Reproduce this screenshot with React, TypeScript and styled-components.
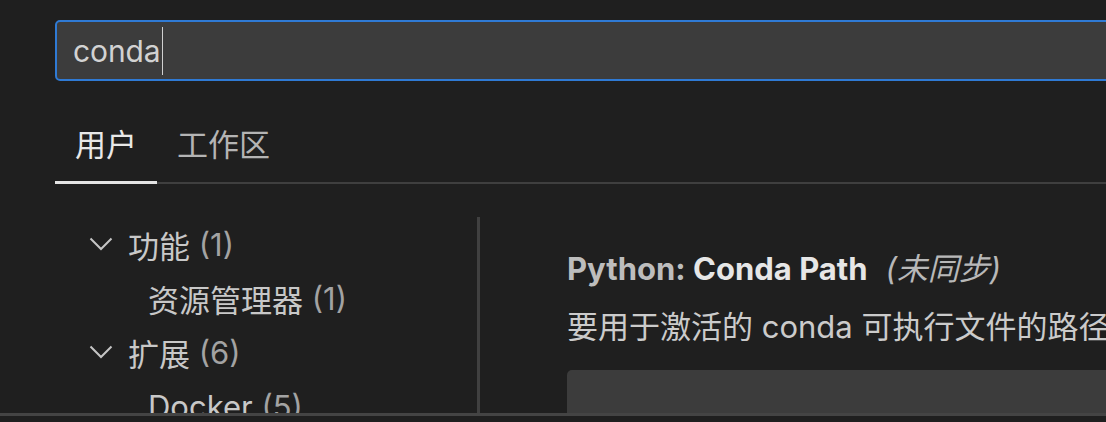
import React from "react";
import styled, { createGlobalStyle } from "styled-components";

const Global = createGlobalStyle`
  html, body {
    margin: 0;
    padding: 0;
    background: #1f1f1f;
    overflow: hidden;
  }
  body {
    font-family: Inter, "Noto Sans CJK SC", sans-serif;
    -webkit-font-smoothing: antialiased;
  }
`;

const Screen = styled.div`
  width: 1106px;
  height: 422px;
  background: #1f1f1f;
  overflow: hidden;
`;

const Editor = styled.div`
  box-sizing: content-box;
  height: 393px;
  padding: 20px 0 0 55px;
  display: flex;
  flex-direction: column;
  overflow: hidden;
  border-bottom: 3px solid #444444;
`;

const SearchBox = styled.div`
  box-sizing: border-box;
  height: 61px;
  width: calc(100% + 20px);
  flex: none;
  border: 2px solid #2f7ad4;
  border-radius: 5px;
  background: #3c3c3c;
  display: flex;
  align-items: center;
  padding-left: 16px;
`;

const SearchText = styled.span`
  font-size: 30px;
  color: #d2d2d2;
  line-height: 1;
  letter-spacing: -0.1px;
`;

const Caret = styled.span`
  width: 1.5px;
  height: 48px;
  margin-left: 1px;
  background: #d0d0d0;
`;

const TabBar = styled.div`
  margin-top: 43px;
  display: flex;
  flex: none;
  box-shadow: inset 0 -2px 0 #3f3f3f;
`;

const Tab = styled.div<{ $active?: boolean }>`
  padding: 0 20px 18px;
  line-height: 42px;
  font-size: 31px;
  color: ${(p) => (p.$active ? "#e8e8e8" : "#b4b4b4")};
  box-shadow: ${(p) => (p.$active ? "inset 0 -3px 0 #e4e4e4" : "none")};
`;

const Body = styled.div`
  flex: 1;
  display: flex;
  min-height: 0;
  overflow: hidden;
`;

const Toc = styled.div`
  width: 425px;
  flex: none;
  margin-top: 33px;
  border-right: 3px solid #404040;
  box-sizing: border-box;
`;

const TocRow = styled.div<{ $level: number }>`
  height: 54px;
  display: flex;
  align-items: center;
  padding-left: ${(p) => (p.$level === 0 ? 34 : 93)}px;
  font-size: 31px;
  color: #c8c8c8;
  white-space: pre;
`;

const ChevronIcon = styled.svg`
  width: 24px;
  height: 14px;
  margin-right: 15px;
  flex: none;
`;

const Count = styled.span`
  color: #a3a3a3;
`;

const Settings = styled.div`
  flex: 1;
  padding: 65px 0 0 87px;
  min-width: 0;
`;

const Title = styled.div`
  font-size: 31px;
  line-height: 40px;
  font-weight: 700;
  white-space: nowrap;
  display: flex;
  align-items: baseline;
`;

const Category = styled.span`
  color: #bdbdbd;
`;

const Name = styled.span`
  color: #e6e6e6;
`;

const Sync = styled.span`
  font-weight: 400;
  font-style: italic;
  color: #b8b8b8;
  margin-left: 18px;
`;

const Desc = styled.div`
  margin-top: 18px;
  font-size: 31px;
  line-height: 40px;
  color: #cbcbcb;
  white-space: nowrap;
`;

const ValueInput = styled.div`
  margin-top: 23px;
  height: 60px;
  width: calc(100% + 20px);
  background: #3c3c3c;
  border-radius: 5px;
`;

const Chevron = () => (
  <ChevronIcon viewBox="0 0 24 14">
    <polyline
      points="1.5,1.5 12,12 22.5,1.5"
      fill="none"
      stroke="#c5c5c5"
      strokeWidth="2"
    />
  </ChevronIcon>
);

export default function App() {
  return (
    <Screen>
      <Global />
      <Editor>
        <SearchBox>
          <SearchText>conda</SearchText>
          <Caret />
        </SearchBox>
        <TabBar>
          <Tab $active>用户</Tab>
          <Tab>工作区</Tab>
        </TabBar>
        <Body>
          <Toc>
            <TocRow $level={0}>
              <Chevron />
              功能 <Count>(1)</Count>
            </TocRow>
            <TocRow $level={1}>
              资源管理器 <Count>(1)</Count>
            </TocRow>
            <TocRow $level={0}>
              <Chevron />
              扩展 <Count>(6)</Count>
            </TocRow>
            <TocRow $level={1}>
              Docker <Count>(5)</Count>
            </TocRow>
          </Toc>
          <Settings>
            <Title>
              <Category>Python:&nbsp;</Category>
              <Name>Conda Path</Name>
              <Sync>(未同步)</Sync>
            </Title>
            <Desc>要用于激活的 conda 可执行文件的路径。</Desc>
            <ValueInput />
          </Settings>
        </Body>
      </Editor>
    </Screen>
  );
}
